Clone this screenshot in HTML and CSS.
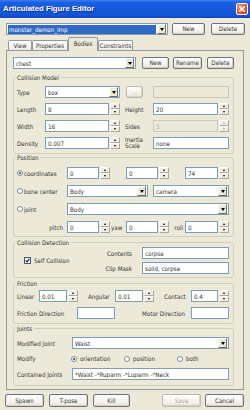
FILE: index.html
```html
<!DOCTYPE html>
<html lang="en">
<head>
    <meta charset="UTF-8">
    <meta name="viewport" content="width=device-width, initial-scale=1.0">
    <title>Articulated Figure Editor</title>
    <link rel="stylesheet" href="styles.css">
</head>
<body>

<div class="titlebar">
    <h1>Articulated Figure Editor</h1>
    <div class="close">
        <svg width="8" height="8" viewBox="0 0 8 8"><path d="M1.2 1.2L6.8 6.8M6.8 1.2L1.2 6.8" stroke="#fff" stroke-width="1.5"/></svg>
    </div>
</div>

<div class="toprow">
    <div class="combo fig-combo"><span class="sel">monster_demon_imp</span><i class="drop"></i></div>
    <button class="btn fig-new">New</button>
    <button class="btn fig-delete">Delete</button>
</div>

<div class="tabs">
    <div class="tab tab-view">View</div>
    <div class="tab tab-props">Properties</div>
    <div class="tab tab-bodies active">Bodies</div>
    <div class="tab tab-cons">Constraints</div>
</div>

<div class="panel">
    <div class="body-row">
        <div class="combo body-combo"><span>chest</span><i class="drop"></i></div>
        <button class="btn body-new">New</button>
        <button class="btn body-rename">Rename</button>
        <button class="btn body-delete">Delete</button>
    </div>

    <!-- collision model -->
    <div class="group g-model">
        <div class="group-title">Collision Model</div>
        <div class="model-grid">
            <label>Type</label>
            <div class="combo"><span>box</span><i class="drop"></i></div>
            <div><button class="btn disabled dots">...</button></div>
            <input class="edit off" type="text" value="" disabled>

            <label>Length</label>
            <div class="spin"><input class="edit" type="text" value="8"><div class="arrows"><i class="up"></i><i class="dn"></i></div></div>
            <label class="lbl2">Height</label>
            <div class="spin"><input class="edit" type="text" value="20"><div class="arrows"><i class="up"></i><i class="dn"></i></div></div>

            <label>Width</label>
            <div class="spin"><input class="edit" type="text" value="16"><div class="arrows"><i class="up"></i><i class="dn"></i></div></div>
            <label class="lbl2">Sides</label>
            <div class="spin off"><input class="edit off" type="text" value="3" disabled><div class="arrows"><i class="up"></i><i class="dn"></i></div></div>

            <label>Density</label>
            <div class="spin"><input class="edit" type="text" value="0.007"><div class="arrows"><i class="up"></i><i class="dn"></i></div></div>
            <label class="lbl2 two-line">Inertia<br>Scale</label>
            <input class="edit" type="text" value="none">
        </div>
    </div>

    <!-- position -->
    <div class="group g-pos">
        <div class="group-title">Position</div>
        <div class="rows">
            <div class="row">
                <div class="opt"><span class="radio on"></span>coordinates</div>
                <div class="spin s43"><input class="edit" type="text" value="0"><div class="arrows"><i class="up"></i><i class="dn"></i></div></div>
                <div class="spin s43 ml16"><input class="edit" type="text" value="0"><div class="arrows"><i class="up"></i><i class="dn"></i></div></div>
                <div class="spin s44 ml16"><input class="edit" type="text" value="74"><div class="arrows"><i class="up"></i><i class="dn"></i></div></div>
            </div>
            <div class="row">
                <div class="opt"><span class="radio"></span>bone center</div>
                <div class="combo c81"><span>Body</span><i class="drop"></i></div>
                <div class="combo c76"><span>camera</span><i class="drop"></i></div>
            </div>
            <div class="row">
                <div class="opt"><span class="radio"></span>joint</div>
                <div class="combo c162"><span>Body</span><i class="drop"></i></div>
            </div>
            <div class="row">
                <label class="pitch">pitch</label>
                <div class="spin s43"><input class="edit" type="text" value="0"><div class="arrows"><i class="up"></i><i class="dn"></i></div></div>
                <label class="yaw">yaw</label>
                <div class="spin s43"><input class="edit" type="text" value="0"><div class="arrows"><i class="up"></i><i class="dn"></i></div></div>
                <label class="roll">roll</label>
                <div class="spin s44"><input class="edit" type="text" value="0"><div class="arrows"><i class="up"></i><i class="dn"></i></div></div>
            </div>
        </div>
    </div>

    <!-- collision detection -->
    <div class="group g-detect">
        <div class="group-title">Collision Detection</div>
        <div class="detect-grid">
            <div class="self">
                <span class="check"><svg width="5" height="5" viewBox="0 0 5 5"><path d="M0.6 2.3L2 3.8L4.4 0.9" fill="none" stroke="#1a1a1a" stroke-width="1.2"/></svg></span>
                Self Collision
            </div>
            <label>Contents</label>
            <input class="edit" type="text" value="corpse">
            <label>Clip Mask</label>
            <input class="edit" type="text" value="solid, corpse">
        </div>
    </div>

    <!-- friction -->
    <div class="group g-friction">
        <div class="group-title">Friction</div>
        <div class="rows">
            <div class="row">
                <label class="f-linear">Linear</label>
                <div class="spin s39"><input class="edit" type="text" value="0.01"><div class="arrows"><i class="up"></i><i class="dn"></i></div></div>
                <label class="f-mid">Angular</label>
                <div class="spin s39"><input class="edit" type="text" value="0.01"><div class="arrows"><i class="up"></i><i class="dn"></i></div></div>
                <label class="f-mid">Contact</label>
                <div class="spin s38"><input class="edit" type="text" value="0.4"><div class="arrows"><i class="up"></i><i class="dn"></i></div></div>
            </div>
            <div class="row">
                <label class="f-dir">Friction Direction</label>
                <input class="edit e38" type="text" value="">
                <label class="f-motor">Motor Direction</label>
                <input class="edit e38" type="text" value="">
            </div>
        </div>
    </div>

    <!-- joints -->
    <div class="group g-joints">
        <div class="group-title">Joints</div>
        <div class="rows">
            <div class="row">
                <label class="j-lbl">Modified Joint</label>
                <div class="combo c157"><span>Waist</span><i class="drop"></i></div>
            </div>
            <div class="row short">
                <label class="j-lbl">Modify</label>
                <div class="ropt"><span class="radio on"></span>orientation</div>
                <div class="ropt"><span class="radio"></span>position</div>
                <div class="ropt"><span class="radio"></span>both</div>
            </div>
            <div class="row">
                <label class="j-lbl">Contained Joints</label>
                <input class="edit e157" type="text" value="*Waist -*Ruparm -*Luparm -*Neck">
            </div>
        </div>
    </div>
</div>

<div class="bottom">
    <button class="btn b-spawn">Spawn</button>
    <button class="btn b-tpose">T-pose</button>
    <button class="btn b-kill">Kill</button>
    <button class="btn disabled b-save">Save</button>
    <button class="btn b-cancel">Cancel</button>
</div>

</body>
</html>
```

FILE: styles.css
```css
* {
    margin: 0;
    padding: 0;
    box-sizing: border-box;
}

body {
    width: 250px;
    height: 410px;
    overflow: hidden;
    background-color: #ece9d8;
    font-family: "DejaVu Sans Condensed", "Liberation Sans", sans-serif;
    font-size: 6.2px;
    color: #333;
}

button, input {
    font: inherit;
    color: inherit;
}

/* title bar */
.titlebar {
    height: 18px;
    display: flex;
    align-items: center;
    justify-content: space-between;
    padding: 0 2px 1px 3px;
    background: linear-gradient(#3a7ff0 0%, #1a5fe2 14%, #1558dc 50%, #1453d6 85%, #0f45c2 100%);
}

.titlebar h1 {
    font: bold 7.8px "Liberation Sans", sans-serif;
    color: #fff;
    text-shadow: 1px 1px 0 #0a2c8c;
}

.close {
    width: 12px;
    height: 12px;
    border: 1px solid #fff;
    border-radius: 2px;
    background: radial-gradient(circle at 35% 30%, #f19a80, #e0522e 60%, #c43a1b);
    display: flex;
    align-items: center;
    justify-content: center;
}

/* common controls */
.btn {
    height: 12px;
    border: 1px solid #6a7280;
    border-radius: 2px;
    background: linear-gradient(#fefefd, #f3f1ea 70%, #e0ddd0);
    box-shadow: inset -1px -1px 0 #d8d3c2;
    text-align: center;
    line-height: 10px;
}

.btn.disabled {
    color: #aca899;
    border-color: #bcbab0;
}

.edit {
    display: block;
    height: 12px;
    border: 1px solid #7f9db9;
    background: #fff;
    padding: 0 2px;
    line-height: 10px;
    outline: none;
}

.edit.off {
    background: #ece9d8;
    border-color: #c9c7ba;
    color: #aca899;
}

.combo {
    height: 12px;
    border: 1px solid #7f9db9;
    background: #fff;
    display: flex;
    align-items: center;
    justify-content: space-between;
    padding: 0 1px 0 2px;
}

.drop {
    width: 9px;
    height: 10px;
    border: 1px solid;
    border-color: #fff #716f64 #716f64 #fff;
    background: #ece9d8;
    display: flex;
    align-items: center;
    justify-content: center;
    flex: none;
}

.drop::after {
    content: "";
    border-left: 2.5px solid transparent;
    border-right: 2.5px solid transparent;
    border-top: 3px solid #000;
}

.spin {
    display: flex;
    height: 12px;
}

.spin .edit {
    flex: 1;
    width: 0;
}

.arrows {
    width: 10px;
    margin-left: 1px;
    display: flex;
    flex-direction: column;
}

.arrows i {
    flex: 1;
    border: 1px solid;
    border-color: #fff #aca899 #aca899 #fff;
    background: #f1efe5;
    display: flex;
    align-items: center;
    justify-content: center;
}

.arrows .up::after {
    content: "";
    border-left: 1.5px solid transparent;
    border-right: 1.5px solid transparent;
    border-bottom: 2px solid #000;
}

.arrows .dn::after {
    content: "";
    border-left: 1.5px solid transparent;
    border-right: 1.5px solid transparent;
    border-top: 2px solid #000;
}

.spin.off .arrows .up::after { border-bottom-color: #aca899; }
.spin.off .arrows .dn::after { border-top-color: #aca899; }

.radio {
    width: 6px;
    height: 6px;
    border-radius: 50%;
    border: 1px solid #7d8d9c;
    background: #fff;
    display: flex;
    align-items: center;
    justify-content: center;
    flex: none;
}

.radio.on::after {
    content: "";
    width: 2px;
    height: 2px;
    border-radius: 50%;
    background: #2a3a2a;
}

.check {
    width: 7px;
    height: 7px;
    border: 1px solid #3f5a73;
    background: #fff;
    display: flex;
    align-items: center;
    justify-content: center;
    flex: none;
}

/* top row */
.toprow {
    display: flex;
    height: 12px;
    margin: 5px 0 0 6px;
}

.fig-combo { width: 162px; padding-left: 1px; }
.fig-combo .sel {
    flex: 1;
    height: 9px;
    line-height: 9px;
    background: #316ac5;
    color: #fff;
    padding-left: 1px;
    margin-right: 1px;
}
.fig-new { width: 33px; margin-left: 4px; }
.fig-delete { width: 34px; margin-left: 6px; }

/* tabs */
.tabs {
    display: flex;
    align-items: flex-end;
    height: 13px;
    margin-top: 2px;
    padding-left: 8px;
}

.tab {
    height: 10px;
    border: 1px solid #919b9c;
    border-bottom: 0;
    border-radius: 2px 2px 0 0;
    background: linear-gradient(#fff, #ecebe4);
    text-align: center;
    line-height: 9px;
}

.tab.active {
    height: 14px;
    margin-bottom: -1px;
    position: relative;
    z-index: 1;
    background: #ece9d8;
    line-height: 12px;
}

.tab-view { width: 24px; }
.tab-props { width: 36px; }
.tab-bodies { width: 30px; }
.tab-cons { width: 35px; }

.panel {
    width: 238px;
    margin-left: 6px;
    border: 1px solid #919b9c;
    padding: 6px 9px 3px 6px;
}

.body-row {
    display: flex;
    height: 12px;
}

.body-combo { width: 123px; }
.body-new { width: 27px; margin-left: 6px; }
.body-rename { width: 29px; margin-left: 4px; }
.body-delete { width: 27px; margin-left: 5px; }

/* group boxes */
.group {
    border: 1px solid #d0d0bf;
    border-radius: 3px;
    padding: 0 4px 3px 3px;
}

.group-title {
    width: fit-content;
    height: 7px;
    line-height: 7px;
    margin: -4px 0 5px -2px;
    padding: 0 2px;
    background: #ece9d8;
}

label {
    display: flex;
    align-items: center;
    white-space: nowrap;
}

.g-model { margin-top: 8px; padding-bottom: 4px; }
.g-pos { margin-top: 3px; }
.g-pos .group-title { margin-bottom: 6px; }
.g-detect { margin-top: 5px; }
.g-detect .group-title { margin-bottom: 1px; }
.g-friction { margin-top: 5px; padding-bottom: 4px; }
.g-friction .group-title { margin-bottom: 3px; }
.g-joints { margin-top: 4px; padding-bottom: 5px; }

/* collision model */
.model-grid {
    display: grid;
    grid-template-columns: 28px 75px 33px 76px;
    grid-auto-rows: 12px;
    row-gap: 5px;
}

.model-grid .lbl2 { padding-left: 5px; }
.model-grid .two-line { line-height: 6.5px; }
.dots { width: 17px; margin-left: 6px; }

/* rows */
.rows {
    display: flex;
    flex-direction: column;
}

.row {
    display: flex;
    align-items: center;
    height: 12px;
}

.g-pos .rows { gap: 6px; }
.g-friction .rows { gap: 5px; }
.g-joints .rows { gap: 4px; }
.g-joints .row.short { height: 11px; }

.opt {
    width: 50px;
    display: flex;
    align-items: center;
    gap: 1px;
    white-space: nowrap;
}

.s43 { width: 43px; }
.s44 { width: 44px; }
.s39 { width: 39px; }
.s38 { width: 38px; }
.ml16 { margin-left: 16px; }
.c81 { width: 81px; }
.c76 { width: 76px; margin-left: 5px; }
.c162 { width: 162px; }
.c157 { width: 157px; }
.e38 { width: 38px; }
.e157 { width: 157px; }

.pitch { width: 50px; justify-content: flex-end; padding-right: 4px; }
.yaw { width: 16px; padding-left: 1px; }
.roll { width: 16px; justify-content: flex-end; padding-right: 2px; }

/* collision detection */
.detect-grid {
    display: grid;
    grid-template-columns: 83px 42px 87px;
    grid-auto-rows: 12px;
    row-gap: 3px;
}

.self {
    grid-row: 1 / 3;
    display: flex;
    align-items: center;
    gap: 3px;
    padding-left: 7px;
}

.detect-grid label {
    justify-content: flex-end;
    padding-right: 10px;
}

/* friction */
.f-linear { width: 22px; }
.f-mid { width: 37px; padding-left: 10px; }
.f-dir { width: 60px; }
.f-motor { width: 76px; padding-left: 27px; }

/* joints */
.j-lbl { width: 55px; }

.ropt {
    width: 55px;
    display: flex;
    align-items: center;
    gap: 3px;
    padding-left: 1px;
}

/* bottom buttons */
.bottom {
    display: flex;
    margin-top: 4px;
    padding-left: 5px;
}

.bottom .btn { height: 13px; line-height: 11px; width: 39px; }
.b-tpose { margin-left: 5px; }
.bottom .b-kill { width: 37px; margin-left: 5px; }
.b-save { margin-left: 32px; }
.b-cancel { margin-left: 4px; }
```
